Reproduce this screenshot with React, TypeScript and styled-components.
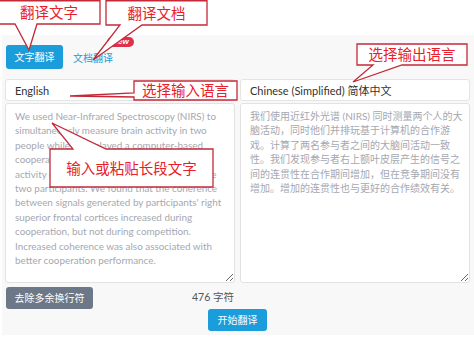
import React from "react";
import styled, { createGlobalStyle } from "styled-components";

const GlobalStyle = createGlobalStyle`
  html, body {
    margin: 0;
    padding: 0;
    background: #ffffff;
  }
  body {
    font-family: "Lato", "Noto Sans CJK SC", sans-serif;
    overflow: hidden;
  }
`;

const Page = styled.div`
  position: relative;
  width: 474px;
  height: 338px;
  padding-top: 35px;
  box-sizing: border-box;
`;

const Panel = styled.div`
  margin-left: 2px;
  height: 300px;
  box-sizing: border-box;
  padding: 10px 4px 4px 3px;
  background: #f8f8f8;
  display: flex;
  flex-direction: column;
`;

const Tabs = styled.div`
  display: flex;
  align-items: center;
  gap: 10px;
  height: 24px;
  padding-left: 1px;
`;

const PrimaryButton = styled.button<{ $width: number; $height: number }>`
  width: ${(p) => p.$width}px;
  height: ${(p) => p.$height}px;
  padding: 0;
  border: none;
  border-radius: 3px;
  background: #1b9cdb;
  color: #ffffff;
  font-family: "Noto Sans CJK SC", sans-serif;
  font-size: 10px;
  line-height: 1;
  cursor: pointer;
`;

const GrayButton = styled(PrimaryButton)`
  background: #6c7887;
  margin-left: 1px;
`;

const TabLink = styled.a`
  position: relative;
  color: #1f9bd6;
  font-family: "Noto Sans CJK SC", sans-serif;
  font-size: 10px;
  text-decoration: none;
  cursor: pointer;
`;

const NewBadge = styled.span`
  position: absolute;
  left: 34px;
  top: -13px;
  width: 27px;
  height: 10px;
  border-radius: 5px;
  background: #e0304c;
  color: #ffffff;
  font-family: "Liberation Sans", sans-serif;
  font-size: 8px;
  font-weight: 700;
  font-style: italic;
  line-height: 10px;
  text-align: center;
`;

const Columns = styled.div`
  display: grid;
  grid-template-columns: 230px 230px;
  column-gap: 5px;
  margin-top: 10px;
`;

const Column = styled.div`
  display: flex;
  flex-direction: column;
  gap: 2px;
`;

const LangSelect = styled.select`
  appearance: none;
  height: 22px;
  padding: 0 9px;
  border: 1px solid #e4e4e4;
  border-radius: 3px;
  background: #ffffff;
  color: #333333;
  font-family: "Lato", "Noto Sans CJK SC", sans-serif;
  font-size: 11px;
  outline: none;
`;

const TextBox = styled.textarea<{ $cjk?: boolean }>`
  height: 180px;
  box-sizing: border-box;
  padding: 5px ${(p) => (p.$cjk ? "5px" : "8px")} 5px 9px;
  border: 1px solid #e2e2e2;
  border-radius: 3px;
  background: #ffffff;
  font-family: "Lato", "Noto Sans CJK SC", sans-serif;
  font-size: ${(p) => (p.$cjk ? "10px" : "9.9px")};
  line-height: 14.4px;
  outline: none;
  &::placeholder {
    color: #a5a8b0;
  }
`;

const BottomRow = styled.div`
  display: grid;
  grid-template-columns: 230px 230px;
  column-gap: 5px;
  margin-top: 4px;
`;

const ToolRow = styled.div`
  display: flex;
  justify-content: space-between;
  align-items: flex-start;
`;

const CharCount = styled.span`
  padding-top: 2px;
  padding-right: 1px;
  color: #555555;
  font-family: "Lato", "Noto Sans CJK SC", sans-serif;
  font-size: 10.5px;
`;

const Center = styled.div`
  display: flex;
  justify-content: center;
`;

/* annotation layer: red callouts drawn over the screenshot */
const Overlay = styled.div`
  position: absolute;
  inset: 0;
  pointer-events: none;
`;

const CalloutLabel = styled.div`
  position: absolute;
  display: flex;
  align-items: center;
  justify-content: center;
  color: #e8202a;
  font-family: "Noto Sans CJK SC", sans-serif;
  font-size: 14.5px;
  line-height: 1;
`;

const callouts = [
  { text: "翻译文字", box: [-2, 0.75, 102, 23.25], d: "M-2 0.75 H100 V24 H37 L29 50 L15 24 H-2 Z" },
  { text: "翻译文档", box: [106, 0.75, 101, 24.25], d: "M106 0.75 H207 V25 H142 L93 60 L120 25 H106 Z" },
  { text: "选择输出语言", box: [357, 44, 110, 21], d: "M357 44 H467 V65 H402 L353 82 L373 65 H357 Z" },
  { text: "选择输入语言", box: [134, 81, 103, 19], d: "M134 81 H237 V100 H134 V97 L70 96 L134 93 Z" },
  { text: "输入或粘贴长段文字", box: [50, 149, 163, 38], d: "M50 149 H73 L52 123 L106 149 H213 V187 H50 Z" },
];

const sourceText =
  "We used Near-Infrared Spectroscopy (NIRS) to simultaneously measure brain activity in two people while they played a computer-based cooperation game side by side. Interbrain activity coherence was calculated between the two participants. We found that the coherence between signals generated by participants' right superior frontal cortices increased during cooperation, but not during competition. Increased coherence was also associated with better cooperation performance.";

const targetText =
  "我们使用近红外光谱 (NIRS) 同时测量两个人的大脑活动，同时他们并排玩基于计算机的合作游戏。计算了两名参与者之间的大脑间活动一致性。我们发现参与者右上额叶皮层产生的信号之间的连贯性在合作期间增加，但在竞争期间没有增加。增加的连贯性也与更好的合作绩效有关。";

const App: React.FC = () => {
  return (
    <>
      <GlobalStyle />
      <Page>
        <Panel>
          <Tabs>
            <PrimaryButton $width={57} $height={24}>文字翻译</PrimaryButton>
            <TabLink>
              文档翻译
              <NewBadge>New</NewBadge>
            </TabLink>
          </Tabs>

          <Columns>
            <Column>
              <LangSelect defaultValue="en">
                <option value="en">English</option>
              </LangSelect>
              <TextBox placeholder={sourceText} />
            </Column>
            <Column>
              <LangSelect defaultValue="zh">
                <option value="zh">Chinese (Simplified) 简体中文</option>
              </LangSelect>
              <TextBox $cjk placeholder={targetText} />
            </Column>
          </Columns>

          <BottomRow>
            <ToolRow>
              <GrayButton $width={87} $height={22}>去除多余换行符</GrayButton>
              <CharCount>476 字符</CharCount>
            </ToolRow>
          </BottomRow>

          <Center>
            <PrimaryButton $width={59} $height={22}>开始翻译</PrimaryButton>
          </Center>
        </Panel>

        <Overlay>
          <svg width="474" height="338" viewBox="0 0 474 338">
            {callouts.map((c) => (
              <path key={c.text} d={c.d} fill="#ffffff" stroke="#c22a38" strokeWidth="1.3" />
            ))}
          </svg>
          {callouts.map((c) => (
            <CalloutLabel
              key={c.text}
              style={{ left: c.box[0], top: c.box[1], width: c.box[2], height: c.box[3] }}
            >
              {c.text}
            </CalloutLabel>
          ))}
        </Overlay>
      </Page>
    </>
  );
};

export default App;
